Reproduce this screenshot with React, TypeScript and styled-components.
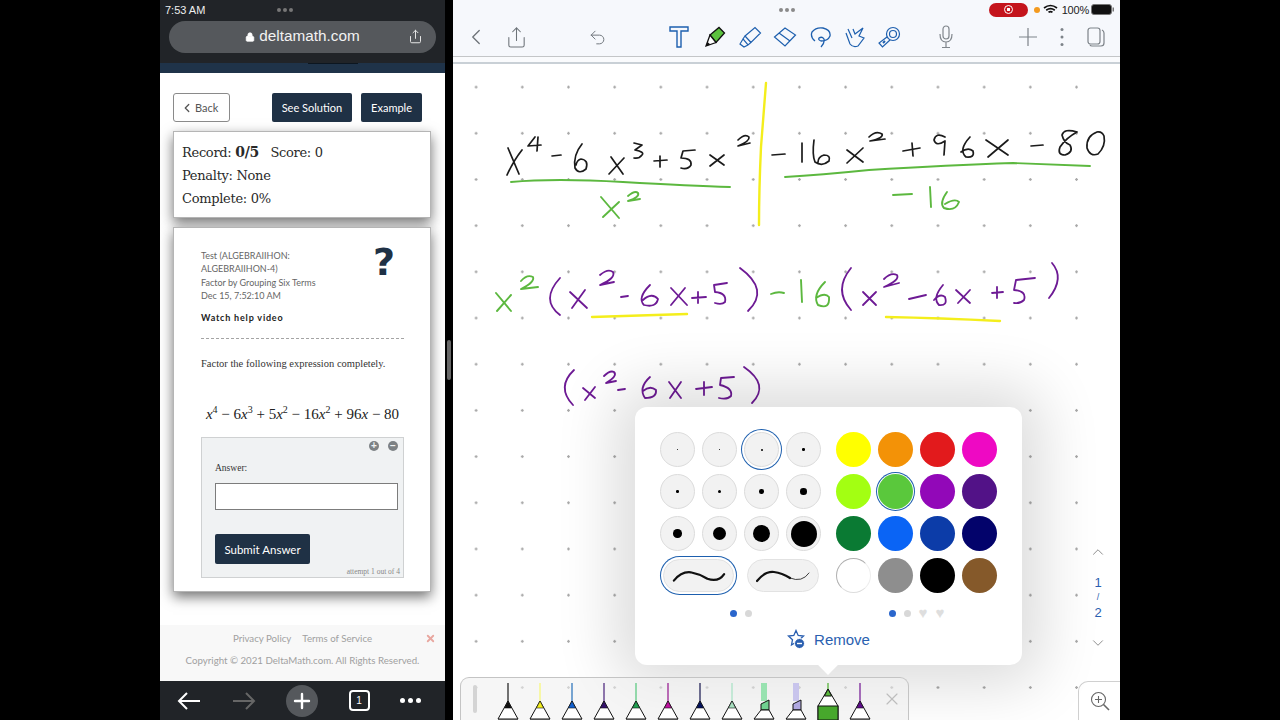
import React from 'react'
import styled, { createGlobalStyle } from 'styled-components'
import { ChevronDown, ChevronLeft, ChevronUp, Lock, Plus, Share, Undo2, X } from 'lucide-react'

const GlobalStyle = createGlobalStyle`
    html, body {
        margin: 0;
        padding: 0;
        background: #000;
        overflow: hidden;
    }
`

const SIZE_DOTS = [1, 1.5, 2, 2.5, 2.5, 3, 4.5, 6.5, 8.5, 13, 17, 26]

const SWATCHES = [
    '#ffff00', '#f39207', '#e21a1c', '#ee09c3',
    '#a3ff12', '#5ac83c', '#9208b8', '#521287',
    '#0a7a33', '#0a64f5', '#0c3ca8', '#03036b',
    '#ffffff', '#8e8e8e', '#000000', '#85592a',
]

const BLACK = '#1b1b1b'
const GREEN = '#5cb83f'
const PURPLE = '#6d1a94'
const YELLOW = '#f4ee1c'

const INK_WIDTH: Record<string, number> = {
    [BLACK]: 1.7,
    [GREEN]: 1.9,
    [PURPLE]: 1.8,
    [YELLOW]: 2.4,
}

// Handwriting on the note canvas, in screen coordinates
const INK: { color: string; d: string }[] = [
    // first line, left of the divider
    { color: BLACK, d: 'M508 148 L519 174 M522 150 Q514 160 507 175' },
    { color: BLACK, d: 'M535 137 L528 146 L541 145 M538 137 L537 151' },
    { color: BLACK, d: 'M552 156 L561 155' },
    { color: BLACK, d: 'M582 144 Q573 155 575 168 Q579 175 586 169 Q589 160 581 159 Q577 160 576 165' },
    { color: BLACK, d: 'M611 157 L623 174 M624 158 L609 174' },
    { color: BLACK, d: 'M634 143 L642 145 L635 150 Q645 152 642 155 Q639 159 634 158' },
    { color: BLACK, d: 'M660 156 L660 167 M654 161 L667 160' },
    { color: BLACK, d: 'M695 150 L683 151 L681 158 Q692 158 691 165 Q688 170 681 168' },
    { color: BLACK, d: 'M710 155 L724 165 M724 155 L710 166' },
    { color: BLACK, d: 'M738 140 Q745 133 749 137 Q750 141 738 146 L750 143' },
    { color: GREEN, d: 'M511 182 Q554 178 623 182 T730 187' },
    { color: GREEN, d: 'M601 197 L619 218 M619 202 L603 217' },
    { color: GREEN, d: 'M628 196 Q635 190 638 193 Q640 197 628 201 L640 199' },
    { color: YELLOW, d: 'M766 83 Q763 120 761 147 Q759 190 759 225' },
    // first line, right of the divider
    { color: BLACK, d: 'M772 155 L785 154' },
    { color: BLACK, d: 'M802 143 L802 162' },
    { color: BLACK, d: 'M814 140 Q812 155 815 162 Q822 167 829 161 Q831 155 824 155 Q818 157 818 162' },
    { color: BLACK, d: 'M847 150 L863 162 M863 148 L847 163' },
    { color: BLACK, d: 'M869 137 Q876 130 882 134 Q884 138 870 141 L885 139' },
    { color: BLACK, d: 'M912 143 L913 156 M903 151 L920 148' },
    { color: BLACK, d: 'M945 137 Q936 132 934 140 Q936 147 945 141 L944 155' },
    { color: BLACK, d: 'M970 137 Q958 150 966 157 Q975 158 973 151 Q968 147 961 152' },
    { color: BLACK, d: 'M986 140 L1008 155 M1008 140 L988 157' },
    { color: BLACK, d: 'M1031 146 L1043 145' },
    { color: BLACK, d: 'M1077 132 Q1064 128 1062 135 Q1064 143 1070 145 Q1074 152 1065 155 Q1057 155 1060 147 Q1066 138 1077 132' },
    { color: BLACK, d: 'M1097 132 Q1086 136 1087 148 Q1090 157 1098 154 Q1106 146 1104 136 Q1102 131 1097 132' },
    { color: GREEN, d: 'M785 177 Q820 175 869 170 Q950 165 1013 163 L1090 166' },
    { color: GREEN, d: 'M893 195 L912 194' },
    { color: GREEN, d: 'M930 187 L931 207' },
    { color: GREEN, d: 'M947 192 Q939 203 944 208 Q955 212 959 202 Q955 198 945 204' },
    // second line
    { color: GREEN, d: 'M496 293 L511 311 M511 295 L497 311' },
    { color: GREEN, d: 'M521 281 Q527 274 533 277 Q535 282 521 289 L538 287' },
    { color: PURPLE, d: 'M560 278 Q540 300 560 315' },
    { color: PURPLE, d: 'M570 292 L587 308 M585 290 L572 308' },
    { color: PURPLE, d: 'M600 275 Q608 268 613 272 Q616 278 600 285 L614 282' },
    { color: PURPLE, d: 'M621 297 L628 296' },
    { color: PURPLE, d: 'M650 285 Q637 298 644 305 Q656 308 658 299 Q652 292 643 300' },
    { color: PURPLE, d: 'M671 288 L687 305 M685 288 L671 305' },
    { color: PURPLE, d: 'M698 292 L698 303 M692 298 L706 297' },
    { color: PURPLE, d: 'M727 283 L714 285 L715 292 Q727 293 725 302 Q722 305 715 303' },
    { color: PURPLE, d: 'M740 268 Q770 290 748 311' },
    { color: GREEN, d: 'M771 294 Q778 291 784 293' },
    { color: GREEN, d: 'M801 280 L802 302' },
    { color: GREEN, d: 'M825 282 Q812 295 818 305 Q830 310 829 297 Q825 292 816 298' },
    { color: PURPLE, d: 'M851 268 Q833 290 851 310' },
    { color: PURPLE, d: 'M863 292 L876 305 M876 292 L863 305' },
    { color: PURPLE, d: 'M884 279 Q891 272 897 275 Q900 280 884 287 L899 283' },
    { color: PURPLE, d: 'M909 299 L926 295' },
    { color: PURPLE, d: 'M943 285 Q932 298 939 305 Q948 306 945 297 Q940 293 934 300' },
    { color: PURPLE, d: 'M956 290 L970 303 M970 290 L958 303' },
    { color: PURPLE, d: 'M997 287 L997 298 M992 293 L1003 292' },
    { color: PURPLE, d: 'M1035 278 L1016 280 L1014 290 Q1027 291 1024 300 Q1020 304 1014 303' },
    { color: PURPLE, d: 'M1052 263 Q1065 278 1049 298' },
    { color: YELLOW, d: 'M592 317 Q630 316 687 314' },
    { color: YELLOW, d: 'M886 317 Q940 318 1000 321' },
    // third line
    { color: PURPLE, d: 'M574 370 Q556 387 573 405' },
    { color: PURPLE, d: 'M583 388 L595 398 M595 387 L585 400' },
    { color: PURPLE, d: 'M604 376 Q610 370 614 372 Q618 376 606 383 L616 381' },
    { color: PURPLE, d: 'M618 390 L625 389' },
    { color: PURPLE, d: 'M650 377 Q638 388 645 398 Q657 398 656 390 Q650 385 643 391' },
    { color: PURPLE, d: 'M669 382 L681 398 M681 382 L670 398' },
    { color: PURPLE, d: 'M704 382 L704 395 M696 389 L712 387' },
    { color: PURPLE, d: 'M734 377 L721 378 L720 385 Q733 388 731 396 Q727 400 719 398' },
    { color: PURPLE, d: 'M744 367 Q770 385 752 403' },
]

type PenKind = 'pen' | 'marker' | 'active'

interface PenSpec {
    kind: PenKind;
    stem: string;
    tip: string;
}

const PENS: PenSpec[] = [
    { kind: 'pen', stem: '#444444', tip: '#111111' },
    { kind: 'pen', stem: '#f7f78c', tip: '#f5f01a' },
    { kind: 'pen', stem: '#4d88c4', tip: '#1060d0' },
    { kind: 'pen', stem: '#6a4a92', tip: '#34106c' },
    { kind: 'pen', stem: '#72cf92', tip: '#20a050' },
    { kind: 'pen', stem: '#a63ea0', tip: '#c010a0' },
    { kind: 'pen', stem: '#40406e', tip: '#02105e' },
    { kind: 'pen', stem: '#b4e4cc', tip: '#a8e0c0' },
    { kind: 'marker', stem: '#98e2b0', tip: '#70d090' },
    { kind: 'marker', stem: '#c8c4ec', tip: '#b0a8e0' },
    { kind: 'active', stem: '#6cbb55', tip: '#5ab83c' },
    { kind: 'pen', stem: '#8a3fa4', tip: '#5e0a8c' },
]

const PenGlyph = ({ kind, stem, tip }: PenSpec) => {
    if (kind === 'active') {
        return (
            <svg width="32" height="42" viewBox="0 0 32 42">
                <path d="M16 5V11" stroke={stem} strokeWidth="1.5" />
                <path d="M16 11L6 28V42H26V28Z" fill="#fff" stroke="#111" strokeWidth="1" />
                <path d="M16 11L12.4 18H19.6Z" fill={tip} stroke="#111" strokeWidth="1" />
                <rect x="6" y="28" width="20" height="14" fill="#47a82c" stroke="#111" strokeWidth="1" />
            </svg>
        )
    }
    if (kind === 'marker') {
        return (
            <svg width="32" height="42" viewBox="0 0 32 42">
                <rect x="13" y="5" width="6" height="18" fill={stem} />
                <path d="M13 32V26L21 22V32Z" fill={tip} stroke="#111" strokeWidth="1" />
                <path d="M13 32H21L26 41H6Z" fill="#fff" stroke="#111" strokeWidth="1" />
                <path d="M6 41.5H26" stroke="#555" strokeWidth="1" />
            </svg>
        )
    }
    return (
        <svg width="32" height="42" viewBox="0 0 32 42">
            <path d="M16 5V24" stroke={stem} strokeWidth="1.5" />
            <path d="M16 23L6 41H26Z" fill="#fff" stroke="#111" strokeWidth="1" />
            <path d="M16 23L12.4 30H19.6Z" fill={tip} stroke="#111" strokeWidth="0.6" />
            <path d="M6 41.5H26" stroke="#555" strokeWidth="1" />
        </svg>
    )
}

/**
 * Split-screen capture: the DeltaMath problem in a phone-width browser on
 * the left, the note-taking app with its colour picker open on the right
 */
export default function App() {
    return (
        <Frame>
            <GlobalStyle />
            <Pillar />
            <BrowserPane>
                <BrowserBar>
                    <ClockRow>
                        <ClockText>7:53 AM</ClockText>
                        <MoreDots $color="#777" $left={72}><i /><i /><i /></MoreDots>
                    </ClockRow>
                    <AddressPill>
                        <Lock size={10} fill="#fff" strokeWidth={2} />
                        <AddressText>deltamath.com</AddressText>
                        <AddressShare><Share size={15} strokeWidth={1.6} /></AddressShare>
                    </AddressPill>
                </BrowserBar>
                <NavyStrip><NavyTab /></NavyStrip>
                <PageBody>
                    <ButtonRow>
                        <BackButton><ChevronLeft size={14} strokeWidth={2.2} />Back</BackButton>
                        <DarkButton $push>See Solution</DarkButton>
                        <DarkButton>Example</DarkButton>
                    </ButtonRow>
                    <RecordCard>
                        <RecordLine>Record: <strong>0/5</strong>&nbsp;&nbsp; Score: 0</RecordLine>
                        <RecordLine>Penalty: None</RecordLine>
                        <RecordLine>Complete: 0%</RecordLine>
                    </RecordCard>
                    <ProblemCard>
                        <ProblemHead>
                            <ProblemMeta>
                                <div>Test (ALGEBRAIIHON:</div>
                                <div>ALGEBRAIIHON-4)</div>
                                <div>Factor by Grouping Six Terms</div>
                                <div>Dec 15, 7:52:10 AM</div>
                            </ProblemMeta>
                            <HelpMark>?</HelpMark>
                        </ProblemHead>
                        <HelpLink>Watch help video</HelpLink>
                        <DashedRule />
                        <Prompt>Factor the following expression completely.</Prompt>
                        <MathLine>
                            <i>x</i><sup>4</sup> − 6<i>x</i><sup>3</sup> + 5<i>x</i><sup>2</sup> − 16<i>x</i><sup>2</sup> + 96<i>x</i> − 80
                        </MathLine>
                        <AnswerBox>
                            <AnswerTools>
                                <RoundTool>+</RoundTool>
                                <RoundTool>−</RoundTool>
                            </AnswerTools>
                            <AnswerLabel>Answer:</AnswerLabel>
                            <AnswerInput />
                            <SubmitButton>Submit Answer</SubmitButton>
                            <AttemptNote>attempt 1 out of 4</AttemptNote>
                        </AnswerBox>
                    </ProblemCard>
                </PageBody>
                <PageFooter>
                    <FooterLinks>
                        <span>Privacy Policy</span>
                        <span>Terms of Service</span>
                        <FooterClose><X size={11} strokeWidth={4} /></FooterClose>
                    </FooterLinks>
                    <FooterCopy>Copyright © 2021 DeltaMath.com. All Rights Reserved.</FooterCopy>
                </PageFooter>
                <BottomNav>
                    <svg width="24" height="20" viewBox="0 0 24 20" fill="none" stroke="#fff" strokeWidth="2">
                        <path d="M23 10H2M10 2L2 10L10 18" />
                    </svg>
                    <svg width="24" height="20" viewBox="0 0 24 20" fill="none" stroke="#666" strokeWidth="2">
                        <path d="M1 10H22M14 2L22 10L14 18" />
                    </svg>
                    <NewTabButton><Plus size={24} strokeWidth={2.4} /></NewTabButton>
                    <TabCount>1</TabCount>
                    <MoreDots $color="#fff" $size={5}><i /><i /><i /></MoreDots>
                </BottomNav>
            </BrowserPane>
            <SplitGutter><SplitHandle /></SplitGutter>
            <NotesPane>
                <NotesHeader>
                    <NotesStatus>
                        <span />
                        <MoreDots $color="#8a8a8a"><i /><i /><i /></MoreDots>
                        <StatusIcons>
                            <RecordPill><RecordDot /></RecordPill>
                            <OrangeDot />
                            <svg width="15" height="11" viewBox="0 0 15 11" fill="none" stroke="#111" strokeWidth="1.7">
                                <path d="M1 4Q7.5 -1 14 4M3.2 6.2Q7.5 3 11.8 6.2M5.5 8.3Q7.5 7 9.5 8.3" />
                            </svg>
                            <BatteryText>100%</BatteryText>
                            <svg width="23" height="11" viewBox="0 0 23 11">
                                <rect x="0.5" y="0.5" width="20" height="10" rx="2.5" fill="#111" stroke="#777" />
                                <rect x="21.5" y="3.5" width="1.5" height="4" fill="#777" />
                            </svg>
                        </StatusIcons>
                    </NotesStatus>
                    <ToolRow>
                        <ToolSlot $gap={0}><ChevronLeft size={26} strokeWidth={1.2} color="#6c7278" /></ToolSlot>
                        <ToolSlot $gap={6}><Share size={23} strokeWidth={1.1} color="#6c7278" /></ToolSlot>
                        <ToolSlot $gap={47}><Undo2 size={19} strokeWidth={1.2} color="#6c7278" /></ToolSlot>
                        <ToolSlot $gap={48}>
                            <svg width="20" height="22" viewBox="0 0 20 22" fill="none" stroke="#1d5fae" strokeWidth="1.4">
                                <path d="M1 1H19V5H12V21H8V5H1Z" />
                            </svg>
                        </ToolSlot>
                        <ToolSlot $gap={2}>
                            <svg width="22" height="22" viewBox="0 0 22 22">
                                <path d="M6 9L15 1.5L20.5 7L12 16.5Z" fill="#5cc23e" stroke="#111" strokeWidth="1.3" />
                                <path d="M6 9L2 20L12 16.5Z" fill="#fff" stroke="#111" strokeWidth="1.3" />
                                <path d="M3.5 16L2 20L6.5 18.5Z" fill="#111" />
                            </svg>
                        </ToolSlot>
                        <ToolSlot $gap={1}>
                            <svg width="24" height="22" viewBox="0 0 24 22" fill="none" stroke="#1d5fae" strokeWidth="1.2">
                                <path d="M7 10L17 1.5L22.5 7L13 16.5ZM5 13L7 10L13 16.5L10 19ZM5 13L2 18L6 21L10 19" />
                            </svg>
                        </ToolSlot>
                        <ToolSlot $gap={1}>
                            <svg width="24" height="22" viewBox="0 0 24 22" fill="none" stroke="#1d5fae" strokeWidth="1.2">
                                <path d="M1.5 11L12 2L22.5 9L12 20ZM6 7L17 15" />
                            </svg>
                        </ToolSlot>
                        <ToolSlot $gap={2}>
                            <svg width="22" height="22" viewBox="0 0 22 22" fill="none" stroke="#1d5fae" strokeWidth="1.3">
                                <path d="M5 15Q0 11 2 6Q6 1 13 2Q21 4 20 10Q18 15 11 15Q8 14 9 12Q12 10 14 13Q15 17 11 21" />
                            </svg>
                        </ToolSlot>
                        <ToolSlot $gap={0}>
                            <svg width="22" height="22" viewBox="0 0 22 22" fill="none" stroke="#1d5fae" strokeWidth="1.2">
                                <path d="M8 12L4 3M2 7L6 18Q9 22 14 20L20 12L15 10L19 2L11 8L9 3" />
                            </svg>
                        </ToolSlot>
                        <ToolSlot $gap={0}>
                            <svg width="23" height="22" viewBox="0 0 23 22" fill="none" stroke="#1d5fae" strokeWidth="1.2">
                                <circle cx="15" cy="8" r="6.5" />
                                <circle cx="15" cy="8" r="3.5" />
                                <path d="M9 11L1 17L4.5 21L12 14" />
                                <path d="M5 17L7 15" strokeWidth="2" />
                            </svg>
                        </ToolSlot>
                        <ToolSlot $gap={23}>
                            <svg width="16" height="24" viewBox="0 0 16 24" fill="none" stroke="#80868c" strokeWidth="1.2">
                                <rect x="5" y="1" width="6" height="13" rx="3" />
                                <path d="M2 9Q2 17 8 17Q14 17 14 9M8 17V22M4 22.5H12" />
                            </svg>
                        </ToolSlot>
                        <ToolSlot $gap={48}>
                            <svg width="20" height="20" viewBox="0 0 20 20" stroke="#7d8389" strokeWidth="1.2">
                                <path d="M10 1V19M1 10H19" />
                            </svg>
                        </ToolSlot>
                        <ToolSlot $gap={0}>
                            <svg width="6" height="20" viewBox="0 0 6 20" fill="#7d8389">
                                <circle cx="3" cy="2.5" r="1.5" />
                                <circle cx="3" cy="10" r="1.5" />
                                <circle cx="3" cy="17.5" r="1.5" />
                            </svg>
                        </ToolSlot>
                        <ToolSlot $gap={0}>
                            <svg width="18" height="20" viewBox="0 0 18 20" fill="none" stroke="#7d8389" strokeWidth="1.2">
                                <rect x="1" y="1" width="12" height="16" rx="2.5" />
                                <path d="M15 3Q17 4 17 6V16Q17 19 14 19H5Q3.5 19 3 18" />
                            </svg>
                        </ToolSlot>
                    </ToolRow>
                </NotesHeader>
                <HeaderBand />
                <Canvas>
                    <InkLayer viewBox="453 64 667 656" width="667" height="656" fill="none" strokeLinecap="round" strokeLinejoin="round">
                        {INK.map((stroke, index) => (
                            <path key={`ink-${index}`} d={stroke.d} stroke={stroke.color} strokeWidth={INK_WIDTH[stroke.color]} />
                        ))}
                    </InkLayer>
                    <PagePager>
                        <ChevronUp size={18} strokeWidth={1.1} color="#777" />
                        <PageNumbers>
                            <span>1</span>
                            <PageSlash>/</PageSlash>
                            <span>2</span>
                        </PageNumbers>
                        <ChevronDown size={18} strokeWidth={1.1} color="#777" />
                    </PagePager>
                    <ZoomCorner>
                        <svg width="20" height="20" viewBox="0 0 20 20" fill="none" stroke="#666" strokeWidth="1.1">
                            <circle cx="8.5" cy="8.5" r="7" />
                            <path d="M8.5 5V12M5 8.5H12" />
                            <path d="M13.5 13.5L19 19" strokeWidth="1.6" />
                        </svg>
                    </ZoomCorner>
                    <Picker>
                        <PickerGrids>
                            <SwatchGrid>
                                {SIZE_DOTS.map((size, index) => (
                                    <SizeChip key={`size-${index}`} $selected={index === 2}>
                                        <SizeDot style={{ width: size, height: size }} />
                                    </SizeChip>
                                ))}
                                <NibChip $selected>
                                    <svg width="54" height="18" viewBox="0 0 58 18" fill="none" stroke="#111" strokeWidth="2.4" strokeLinecap="round">
                                        <path d="M2 14Q10 4 20 5Q30 7 38 12Q50 16 56 7" />
                                    </svg>
                                </NibChip>
                                <NibChip>
                                    <svg width="54" height="16" viewBox="0 0 54 16" fill="none" stroke="#111" strokeLinecap="round">
                                        <path d="M1 13Q9 3 18 4Q26 5 34 10" strokeWidth="2.2" />
                                        <path d="M34 10Q46 15 53 5" strokeWidth="0.8" />
                                    </svg>
                                </NibChip>
                            </SwatchGrid>
                            <SwatchGrid>
                                {SWATCHES.map((color, index) => (
                                    <ColorChip key={`color-${index}`} $color={color} $selected={index === 5} $blank={index === 12} />
                                ))}
                            </SwatchGrid>
                        </PickerGrids>
                        <PagerRows>
                            <PageDots>
                                <PageDot $on />
                                <PageDot />
                            </PageDots>
                            <PageDots>
                                <PageDot $on />
                                <PageDot />
                                <HeartDot>♥</HeartDot>
                                <HeartDot>♥</HeartDot>
                            </PageDots>
                        </PagerRows>
                        <RemoveRow>
                            <svg width="20" height="20" viewBox="0 0 20 20">
                                <path d="M9 1.5L11.2 6.5L16.5 7L12.5 10.7L13.5 16L9 13.3L4.5 16L5.5 10.7L1.5 7L6.8 6.5Z" fill="none" stroke="#2a5fb0" strokeWidth="1.3" />
                                <circle cx="12.5" cy="14.5" r="5" fill="#2a5fb0" stroke="#fff" />
                                <path d="M10 14.5H15" stroke="#fff" strokeWidth="1.4" />
                            </svg>
                            Remove
                        </RemoveRow>
                        <PickerTail />
                    </Picker>
                    <PenTray>
                        <TrayGrip />
                        <PenRow>
                            {PENS.map((pen, index) => (
                                <PenGlyph key={`pen-${index}`} {...pen} />
                            ))}
                        </PenRow>
                        <X size={20} strokeWidth={1.4} color="#bdbdbd" />
                    </PenTray>
                </Canvas>
            </NotesPane>
            <Pillar />
        </Frame>
    )
}

const Frame = styled.div`
    display: flex;
    width: 1280px;
    height: 720px;
    background: #000;
    overflow: hidden;
    font-family: "Liberation Sans", Arial, sans-serif;
`

const Pillar = styled.div`
    width: 160px;
    flex: none;
    background: #000;
`

const BrowserPane = styled.div`
    width: 285px;
    flex: none;
    display: flex;
    flex-direction: column;
    background: #fafafa;
`

const BrowserBar = styled.div`
    height: 63px;
    flex: none;
    box-sizing: border-box;
    padding-top: 2px;
    background: #212428;
    color: #fff;
`

const ClockRow = styled.div`
    display: flex;
    align-items: center;
    height: 15px;
    padding-left: 5px;
`

const ClockText = styled.span`
    font-size: 11px;
    color: #eee;
`

const MoreDots = styled.div<{ $color: string; $left?: number; $size?: number }>`
    display: flex;
    gap: ${props => (props.$size ? 3 : 2)}px;
    margin-left: ${props => props.$left ?? 0}px;
    i {
        display: block;
        width: ${props => props.$size ?? 4}px;
        height: ${props => props.$size ?? 4}px;
        border-radius: 50%;
        background: ${props => props.$color};
    }
`

const AddressPill = styled.div`
    position: relative;
    display: flex;
    align-items: center;
    justify-content: center;
    gap: 4px;
    height: 32px;
    margin: 4px 9px 0;
    border-radius: 16px;
    background: #55585c;
`

const AddressText = styled.span`
    font-size: 15.3px;
    line-height: 30px;
    margin-bottom: 2px;
    color: #f2f2f2;
`

const AddressShare = styled.span`
    position: absolute;
    right: 13px;
    top: 8px;
    color: #e4e4e4;
`

const NavyStrip = styled.div`
    height: 10px;
    flex: none;
    display: flex;
    justify-content: center;
    background: #1f3349;
`

const NavyTab = styled.div`
    width: 50px;
    height: 1px;
    margin-left: 60px;
    background: #0c1620;
`

const PageBody = styled.div`
    flex: 1;
    padding: 20px 14px 0 13px;
    background: #fff;
`

const ButtonRow = styled.div`
    display: flex;
    gap: 9px;
    height: 29px;
    margin-bottom: 9px;
    margin-right: 9px;
`

const BackButton = styled.div`
    display: flex;
    align-items: center;
    gap: 1px;
    box-sizing: border-box;
    width: 57px;
    padding-left: 6px;
    border: 1px solid #8a8a8a;
    border-radius: 3px;
    font-family: Lato, sans-serif;
    font-size: 11px;
    color: #555;
`

const DarkButton = styled.div<{ $push?: boolean }>`
    display: flex;
    align-items: center;
    padding: 0 10px;
    margin-left: ${props => (props.$push ? 'auto' : 0)};
    border-radius: 2px;
    background: #1f3145;
    font-family: Lato, sans-serif;
    font-size: 11px;
    color: #fff;
`

const RecordCard = styled.div`
    box-sizing: border-box;
    height: 87px;
    margin-bottom: 9px;
    padding: 9px 8px;
    border: 1px solid #b5b5b5;
    background: #fff;
    box-shadow: 0 5px 12px rgba(0, 0, 0, 0.55);
`

const RecordLine = styled.div`
    font-family: "DejaVu Serif", "Liberation Serif", serif;
    font-size: 13px;
    line-height: 23px;
    letter-spacing: -0.3px;
    color: #2a2a2a;
    strong {
        font-size: 14px;
    }
`

const ProblemCard = styled.div`
    box-sizing: border-box;
    height: 365px;
    padding: 21px 26px 0 27px;
    border: 1px solid #b5b5b5;
    background: #fff;
    box-shadow: 0 5px 12px rgba(0, 0, 0, 0.55);
`

const ProblemHead = styled.div`
    position: relative;
    height: 54px;
`

const ProblemMeta = styled.div`
    font-family: Lato, sans-serif;
    font-size: 9px;
    line-height: 13.4px;
    color: #666;
`

const HelpMark = styled.div`
    position: absolute;
    right: 9px;
    top: -8px;
    font-family: "DejaVu Sans", sans-serif;
    font-weight: 700;
    font-size: 38px;
    line-height: 42px;
    color: #1f3145;
`

const HelpLink = styled.div`
    margin-top: 8px;
    font-family: Lato, sans-serif;
    font-weight: 700;
    font-size: 9px;
    line-height: 13px;
    letter-spacing: 0.8px;
    color: #222;
`

const DashedRule = styled.div`
    margin-top: 14px;
    border-top: 1px dashed #a4a4a4;
`

const Prompt = styled.div`
    margin-top: 18px;
    font-family: "Liberation Serif", serif;
    font-size: 10.5px;
    line-height: 14px;
    color: #333;
`

const MathLine = styled.div`
    margin-top: 33px;
    height: 20px;
    white-space: nowrap;
    text-align: center;
    font-family: "Liberation Serif", serif;
    font-size: 15px;
    line-height: 20px;
    color: #222;
    sup {
        font-size: 10px;
        line-height: 0;
    }
`

const AnswerBox = styled.div`
    position: relative;
    box-sizing: border-box;
    height: 141px;
    margin-top: 13px;
    padding: 23px 5px 0 13px;
    border: 1px solid #cfd1d2;
    background: #f0f2f3;
`

const AnswerTools = styled.div`
    position: absolute;
    top: 3px;
    right: 5px;
    display: flex;
    gap: 9px;
`

const RoundTool = styled.span`
    display: flex;
    align-items: center;
    justify-content: center;
    width: 10px;
    height: 10px;
    border-radius: 50%;
    background: #7d8184;
    font-weight: 700;
    font-size: 10px;
    line-height: 10px;
    color: #f0f2f3;
`

const AnswerLabel = styled.div`
    font-family: "Liberation Serif", serif;
    font-size: 9.5px;
    line-height: 14px;
    color: #333;
`

const AnswerInput = styled.div`
    box-sizing: border-box;
    height: 27px;
    margin-top: 8px;
    border: 1px solid #7c7c7c;
    background: #fff;
`

const SubmitButton = styled.div`
    display: flex;
    align-items: center;
    justify-content: center;
    width: 95px;
    height: 30px;
    margin-top: 24px;
    border-radius: 2px;
    background: #1f3145;
    font-family: Lato, sans-serif;
    font-size: 11.5px;
    color: #fff;
`

const AttemptNote = styled.div`
    position: absolute;
    right: 3px;
    bottom: 1px;
    font-family: "Liberation Serif", serif;
    font-size: 7.5px;
    color: #888;
`

const PageFooter = styled.div`
    height: 56px;
    flex: none;
    box-sizing: border-box;
    padding-top: 6px;
    background: #f8f8f8;
    font-family: Lato, sans-serif;
    font-size: 9.7px;
    color: #a0a0a0;
`

const FooterLinks = styled.div`
    position: relative;
    display: flex;
    justify-content: center;
    gap: 11px;
    height: 14px;
    line-height: 14px;
`

const FooterClose = styled.span`
    position: absolute;
    right: 9px;
    top: 2px;
    color: #e8a79f;
`

const FooterCopy = styled.div`
    margin-top: 8px;
    line-height: 14px;
    text-align: center;
    white-space: nowrap;
`

const BottomNav = styled.div`
    height: 39px;
    flex: none;
    display: flex;
    align-items: center;
    justify-content: space-between;
    box-sizing: border-box;
    padding: 0 24px 0 17px;
    background: #212428;
`

const NewTabButton = styled.div`
    display: flex;
    align-items: center;
    justify-content: center;
    width: 32px;
    height: 32px;
    border-radius: 50%;
    background: #55585c;
    color: #fff;
`

const TabCount = styled.div`
    display: flex;
    align-items: center;
    justify-content: center;
    box-sizing: border-box;
    width: 21px;
    height: 21px;
    border: 2px solid #fff;
    border-radius: 4px;
    font-size: 10px;
    color: #fff;
`

const SplitGutter = styled.div`
    width: 8px;
    flex: none;
    display: flex;
    align-items: center;
    justify-content: center;
    background: #000;
`

const SplitHandle = styled.div`
    width: 4px;
    height: 40px;
    border-radius: 2px;
    background: #666;
`

const NotesPane = styled.div`
    width: 667px;
    flex: none;
    display: flex;
    flex-direction: column;
    background: #fff;
`

const NotesHeader = styled.div`
    height: 57px;
    flex: none;
    box-sizing: border-box;
    background: #f6f8fc;
    border-bottom: 1px solid #c4c6c8;
`

const NotesStatus = styled.div`
    display: grid;
    grid-template-columns: 1fr auto 1fr;
    align-items: center;
    height: 19px;
`

const StatusIcons = styled.div`
    display: flex;
    align-items: center;
    justify-content: flex-end;
    padding-right: 6px;
    gap: 3px;
`

const RecordPill = styled.div`
    display: flex;
    align-items: center;
    justify-content: center;
    width: 39px;
    height: 14px;
    margin-right: 3px;
    border-radius: 7px;
    background: #c4141c;
`

const RecordDot = styled.div`
    box-sizing: border-box;
    width: 9px;
    height: 9px;
    border: 1.5px solid #fff;
    border-radius: 50%;
    background: radial-gradient(circle, #fff 0, #fff 1.4px, transparent 1.9px);
`

const OrangeDot = styled.div`
    width: 6px;
    height: 6px;
    border-radius: 50%;
    background: #f39a1f;
`

const BatteryText = styled.span`
    margin: 0 -1px 0 1px;
    font-size: 11px;
    letter-spacing: -0.2px;
    color: #222;
`

const ToolRow = styled.div`
    display: flex;
    align-items: center;
    height: 36px;
    padding-left: 6px;
`

const ToolSlot = styled.div<{ $gap: number }>`
    display: flex;
    align-items: center;
    justify-content: center;
    width: 34px;
    height: 36px;
    flex: none;
    margin-left: ${props => props.$gap}px;
`

const HeaderBand = styled.div`
    height: 7px;
    flex: none;
    box-sizing: border-box;
    background: #fafbfd;
    border-bottom: 2px solid #c9d0d6;
`

const Canvas = styled.div`
    position: relative;
    flex: 1;
    overflow: hidden;
    background-color: #fff;
    background-image: radial-gradient(circle at center, #a8a8a8 0, #a8a8a8 1px, transparent 1.5px);
    background-size: 46.2px 46.2px;
`

const InkLayer = styled.svg`
    position: absolute;
    left: 0;
    top: 0;
`

const PagePager = styled.div`
    position: absolute;
    right: 13px;
    top: 479px;
    display: flex;
    flex-direction: column;
    align-items: center;
    gap: 14px;
`

const PageNumbers = styled.div`
    display: flex;
    flex-direction: column;
    align-items: center;
    font-size: 13px;
    line-height: 15px;
    color: #2a5fb0;
`

const PageSlash = styled.span`
    font-size: 9px;
`

const ZoomCorner = styled.div`
    position: absolute;
    right: 0;
    bottom: 0;
    display: flex;
    align-items: center;
    justify-content: center;
    width: 42px;
    height: 39px;
    box-sizing: border-box;
    border: 1px solid #d0d0d0;
    border-width: 1px 0 0 1px;
    border-top-left-radius: 10px;
    background: #fff;
`

const Picker = styled.div`
    position: absolute;
    left: 182px;
    top: 343px;
    box-sizing: border-box;
    width: 387px;
    height: 258px;
    padding: 25px 25px 0 25px;
    border-radius: 12px;
    background: #fff;
    box-shadow: 0 0 60px 20px rgba(0, 0, 0, 0.14);
`

const PickerGrids = styled.div`
    display: flex;
    gap: 15px;
`

const SwatchGrid = styled.div`
    display: grid;
    grid-template-columns: repeat(4, 35px);
    grid-auto-rows: 35px;
    gap: 7px;
    width: 161px;
`

const SizeChip = styled.div<{ $selected?: boolean }>`
    display: flex;
    align-items: center;
    justify-content: center;
    box-sizing: border-box;
    border: 1px solid #dcdcdc;
    border-radius: 50%;
    background: #f2f2f2;
    box-shadow: ${props => (props.$selected ? '0 0 0 2px #fff, 0 0 0 3px #1d5fae' : 'none')};
`

const SizeDot = styled.div`
    flex: none;
    border-radius: 50%;
    background: #000;
`

const NibChip = styled.div<{ $selected?: boolean }>`
    grid-column: span 2;
    display: flex;
    align-items: center;
    justify-content: center;
    box-sizing: border-box;
    height: 33px;
    margin-top: 1px;
    border: 1px solid #e2e2e2;
    border-radius: 17px;
    background: #f2f2f2;
    box-shadow: ${props => (props.$selected ? '0 0 0 2px #fff, 0 0 0 3px #1d5fae' : 'none')};
    ${props => (props.$selected ? 'width: 71px; margin-left: 3px;' : 'width: 72px; margin-left: 3px;')}
`

const ColorChip = styled.div<{ $color: string; $selected?: boolean; $blank?: boolean }>`
    box-sizing: border-box;
    border-radius: 50%;
    background: ${props => props.$color};
    border: ${props => (props.$blank ? '1px solid' : 'none')};
    border-color: #b0b0b0 #eeeeee #dddddd #b0b0b0;
    box-shadow: ${props => (props.$selected ? '0 0 0 1px #fff, 0 0 0 2px #1d5fae' : 'none')};
`

const PagerRows = styled.div`
    display: flex;
    gap: 15px;
    margin-top: 14px;
`

const PageDots = styled.div`
    display: flex;
    align-items: center;
    justify-content: center;
    gap: 8px;
    width: 161px;
    height: 12px;
`

const PageDot = styled.span<{ $on?: boolean }>`
    width: 7px;
    height: 7px;
    border-radius: 50%;
    background: ${props => (props.$on ? '#2a66cc' : '#d8d8d8')};
`

const HeartDot = styled.span`
    display: flex;
    justify-content: center;
    width: 9px;
    font-size: 15px;
    line-height: 12px;
    color: #dedede;
`

const RemoveRow = styled.div`
    display: flex;
    align-items: center;
    justify-content: center;
    gap: 7px;
    height: 24px;
    margin-top: 8px;
    font-size: 15px;
    color: #2a5fb0;
`

const PickerTail = styled.div`
    position: absolute;
    left: 183px;
    bottom: -10px;
    width: 20px;
    height: 20px;
    transform: rotate(45deg) scale(0.7);
    background: #fff;
`

const PenTray = styled.div`
    position: absolute;
    left: 7px;
    bottom: 0;
    display: flex;
    align-items: center;
    box-sizing: border-box;
    width: 449px;
    height: 43px;
    padding-left: 12px;
    border: 1px solid #c4c4c4;
    border-bottom: none;
    border-radius: 9px 9px 0 0;
    background: rgba(240, 240, 240, 0.6);
`

const TrayGrip = styled.div`
    flex: none;
    width: 4px;
    height: 28px;
    border-radius: 2px;
    background: #d4d4d4;
    margin-right: 15px;
`

const PenRow = styled.div`
    display: flex;
    flex: none;
    height: 42px;
    margin-right: 6px;
`
